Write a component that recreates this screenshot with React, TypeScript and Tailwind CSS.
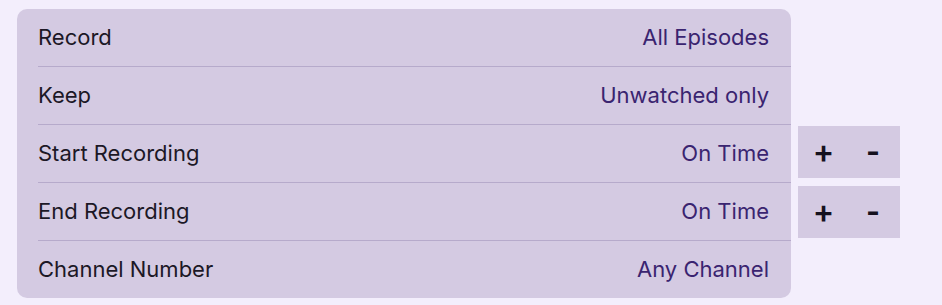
const rows = [
  { label: "Record", value: "All Episodes" },
  { label: "Keep", value: "Unwatched only" },
  { label: "Start Recording", value: "On Time" },
  { label: "End Recording", value: "On Time" },
  { label: "Channel Number", value: "Any Channel" },
];

function Stepper() {
  return (
    <div className="flex h-[52px] w-[102px] items-center bg-[#d4cae2] text-[#16121f]">
      <button className="flex h-full w-[50px] items-center justify-center pl-[1px] text-[32px] font-semibold leading-none">
        +
      </button>
      <button className="flex h-full w-[52px] items-center justify-center pr-[2px] pb-[3px] text-[30px] font-bold leading-none">
        -
      </button>
    </div>
  );
}

export default function App() {
  return (
    <div
      className="flex h-[305px] w-[942px] items-start bg-[#f3eefc] pl-[17px] pt-[9px]"
      style={{ fontFamily: "Inter, 'Noto Sans', sans-serif" }}
    >
      <div className="w-[774px] rounded-[10px] bg-[#d4cae2] pl-[21px]">
        {rows.map((row, i) => (
          <div
            key={row.label}
            className={`flex items-center justify-between pr-[22px] text-[22px] ${
              i < rows.length - 1 ? "h-[58px] border-b border-[#b6aacb]" : "h-[57px]"
            }`}
          >
            <span className="text-[#1c1826]">{row.label}</span>
            <span className="text-[#3a2470]">{row.value}</span>
          </div>
        ))}
      </div>
      <div className="ml-[7px] mt-[117px] flex flex-col gap-[8px]">
        <Stepper />
        <Stepper />
      </div>
    </div>
  );
}
